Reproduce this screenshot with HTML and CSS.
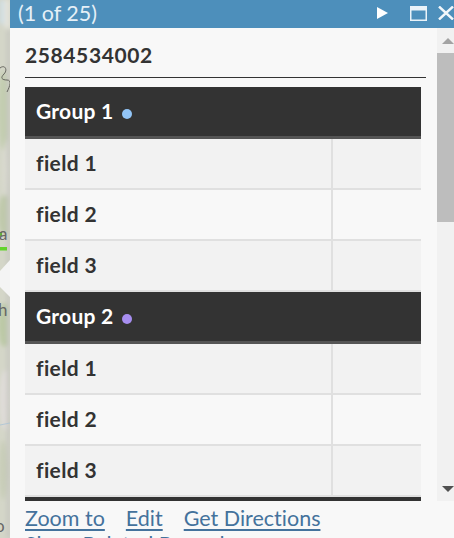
FILE: index.html
```html
<!DOCTYPE html>
<html lang="en">
<head>
<meta charset="utf-8">
<title>Popup</title>
<link rel="stylesheet" href="styles.css">
</head>
<body>
<div class="page">
  <svg class="map" width="10" height="538" viewBox="0 0 10 538">
    <defs>
      <filter id="soft" x="-50%" y="-50%" width="200%" height="200%"><feGaussianBlur stdDeviation="2"/></filter>
    </defs>
    <rect width="10" height="538" fill="#d4d6c8"/>
    <g filter="url(#soft)">
      <rect x="0" y="0" width="5" height="24" fill="#cfdfe6"/>
      <rect x="4" y="0" width="6" height="28" fill="#e2e2da"/>
      <ellipse cx="3" cy="110" rx="5" ry="40" fill="#c3cdb0"/>
      <ellipse cx="7" cy="170" rx="4" ry="30" fill="#dcdcd2"/>
      <ellipse cx="4" cy="215" rx="6" ry="20" fill="#bfc9ab"/>
      <ellipse cx="4" cy="325" rx="6" ry="22" fill="#bcc9a6"/>
      <ellipse cx="5" cy="400" rx="6" ry="30" fill="#dfdcd8"/>
      <ellipse cx="3" cy="470" rx="4" ry="30" fill="#c8cdb8"/>
      <rect x="7" y="30" width="3" height="508" fill="#c4c4c0"/>
    </g>
    <path d="M0 68C5 64 8 70 4 74S2 80 7 80S10 86 7 92" fill="none" stroke="#66665f" stroke-width="1"/>
    <path d="M0 425L10 423" fill="none" stroke="#a9c4d6" stroke-width=".8"/>
    <rect x="0" y="247" width="7" height="3.500" fill="#62d32c"/>
    <rect x="0" y="232" width="2" height="4" fill="#62b03a"/>
    <text class="map-label" x="-1" y="240">a</text>
    <text class="map-label" x="-2" y="316">h</text>
    <text class="map-label" x="-5" y="532">o</text>
    <path d="M10 260L0 271V287L10 297Z" fill="#f4f4f4"/>
  </svg>
  <div class="popup">
    <header class="titlebar">
      <span class="count">(1 of 25)</span>
      <span class="controls">
        <svg class="ic-play" width="11" height="12" viewBox="0 0 11 12"><path d="M0 0L11 6L0 12Z" fill="#fff"/></svg>
        <svg class="ic-max" width="17" height="15" viewBox="0 0 17 15"><path d="M0 0H17V15H0ZM1.500 4.500V13.500H15.500V4.500Z" fill="#eaf3f9" fill-rule="evenodd"/></svg>
        <svg class="ic-x" width="16" height="14" viewBox="0 0 16 14"><path d="M1 .5L15 13.500M15 .5L1 13.500" stroke="#f2f7fb" stroke-width="2.400" fill="none"/></svg>
      </span>
    </header>
    <div class="body">
      <div class="scrollarea">
        <div class="content">
          <div class="title">2584534002</div>
          <div class="rule"></div>
          <table class="attrs">
            <colgroup><col class="col-name"><col></colgroup>
            <tr class="group"><th colspan="2">Group 1 <i class="dot blue"></i></th></tr>
            <tr class="odd"><td>field 1</td><td></td></tr>
            <tr><td>field 2</td><td></td></tr>
            <tr class="odd"><td>field 3</td><td></td></tr>
            <tr class="group"><th colspan="2">Group 2 <i class="dot purple"></i></th></tr>
            <tr class="odd"><td>field 1</td><td></td></tr>
            <tr><td>field 2</td><td></td></tr>
            <tr class="odd"><td>field 3</td><td></td></tr>
          </table>
          <div class="nextgroup"></div>
        </div>
        <div class="scrollbar">
          <div class="btn"><svg width="12" height="6" viewBox="0 0 12 6"><path d="M6 0L12 6H0Z" fill="#a3a3a3"/></svg></div>
          <div class="track"><div class="thumb"></div></div>
          <div class="btn btn-down"><svg width="12" height="6" viewBox="0 0 12 6"><path d="M0 0H12L6 6Z" fill="#505050"/></svg></div>
        </div>
      </div>
      <div class="actions">
        <a href="#">Zoom to</a><a href="#">Edit</a><a href="#">Get Directions</a><a href="#">Show Related Records</a>
      </div>
    </div>
  </div>
</div>
</body>
</html>
```
FILE: styles.css
```css
* { box-sizing: border-box; }
html, body { margin: 0; height: 100%; overflow: hidden; }
body { font-family: Lato, "Open Sans", sans-serif; color: #333; font-variant-ligatures: none; }
.page { display: flex; width: 454px; height: 538px; overflow: hidden; }
.map { flex: none; display: block; }
.map-label { font-family: Lato, sans-serif; font-size: 17px; fill: #666; }
.popup { flex: 1; min-width: 0; display: flex; flex-direction: column; background: #f8f8f8; }
.titlebar {
  flex: none;
  height: 28px;
  display: flex;
  align-items: center;
  justify-content: space-between;
  background: #4d8fbb;
  color: #e6f0f7;
  padding: 0 0 2px 8px;
}
.count { font-size: 21.500px; }
.controls { display: flex; align-items: center; }
.ic-play { margin-right: 22px; }
.ic-max { margin-right: 11px; }
.body { flex: 1; min-height: 0; display: flex; flex-direction: column; }
.scrollarea { flex: none; height: 473px; display: flex; overflow: hidden; }
.content { width: 427px; flex: none; padding: 0 11px 0 15px; overflow: hidden; }
.title { height: 49px; padding-top: 14px; font-size: 21px; line-height: 26px; font-weight: 700; letter-spacing: .6px; }
.rule { width: 401px; height: 1px; background: #333; margin-bottom: 9px; }
.attrs { width: 396px; border-collapse: separate; border-spacing: 0; table-layout: fixed; }
.col-name { width: 308px; }
.attrs th { height: 52px; padding: 0 11px 3px 12px; text-align: left; background: #333; color: #fff; border-bottom: 3px solid #555; font-size: 21px; font-weight: 700; letter-spacing: .25px; }
.attrs td { height: 51px; padding: 0 12px 3px; font-size: 21px; font-weight: 700; letter-spacing: .35px; border-bottom: 2px solid #e0e0e0; background: #f8f8f8; }
.attrs th, .attrs td:first-child { text-indent: -1px; }
.attrs td:first-child { border-right: 2px solid #e0e0e0; }
.attrs .odd td { background: #f2f2f2; }
.dot { display: inline-block; width: 10px; height: 10px; border-radius: 50%; margin-left: 3px; vertical-align: -0.5px; }
.dot.blue { background: #92c5f7; }
.dot.purple { background: #a78ef0; }
.nextgroup { width: 396px; height: 5px; background: #333; }
.scrollbar { width: 17px; flex: none; display: flex; flex-direction: column; background: #f1f1f1; }
.btn { flex: none; height: 25px; display: flex; align-items: center; justify-content: flex-end; }
.btn-down { height: 21px; align-items: flex-end; padding-bottom: 9px; }
.track { flex: 1; }
.thumb { height: 169px; background: #bdbdbd; }
.actions { padding: 4px 0 0 15px; font-size: 21.500px; line-height: 26px; display: flex; flex-wrap: wrap; column-gap: 21px; width: 427px; }
.actions a { color: #44729c; text-decoration: underline; text-underline-offset: 3px; }
```
